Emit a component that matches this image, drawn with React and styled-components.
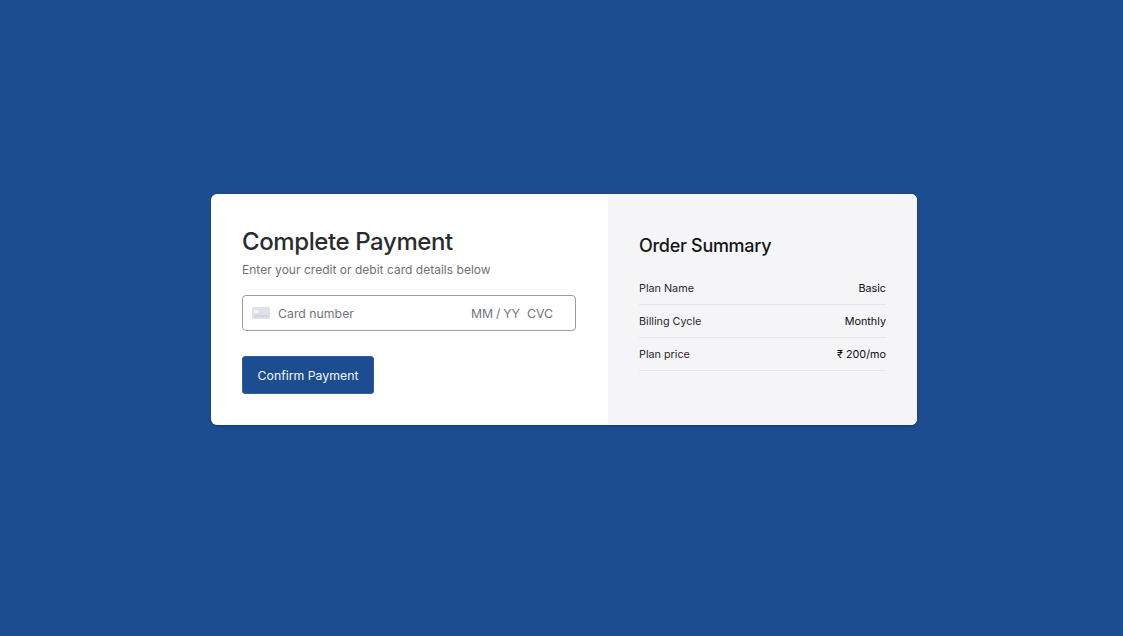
import React from "react";
import styled, { createGlobalStyle } from "styled-components";

const Global = createGlobalStyle`
  html, body { margin: 0; padding: 0; height: 100%; }
  body { background: #1c4d91; font-family: Inter, "Liberation Sans", sans-serif; }
  #root { height: 100%; }
  * { box-sizing: border-box; }
`;
const Page = styled.main`
  height: 636px;
  padding: 194px 0 0 211px;
`;
const Card = styled.section`
  width: 706px;
  height: 231px;
  display: flex;
  border-radius: 6px;
  overflow: hidden;
  background: #fff;
  box-shadow: 0 1px 3px rgba(0, 0, 0, 0.25);
`;
const Left = styled.div`
  width: 397px;
  padding: 33px 31px 0 31px;
`;
const Title = styled.h1`
  margin: 0;
  font-size: 24px;
  line-height: 30px;
  font-weight: 500;
  letter-spacing: -0.4px;
  color: #2a2c2e;
`;
const Sub = styled.p`
  margin: 5px 0 0;
  font-size: 12px;
  line-height: 16px;
  letter-spacing: 0.02px;
  color: #6f7175;
`;
const Field = styled.div`
  margin-top: 17px;
  width: 334px;
  height: 36px;
  display: flex;
  align-items: center;
  padding: 0 22px 0 9px;
  border: 1px solid #9a9b9e;
  border-radius: 4px;
  font-size: 12.3px;
  color: #737579;
`;
const CardIcon = styled.svg`
  width: 18px;
  height: 12px;
  margin-right: 8px;
  flex: none;
`;
const Grow = styled.span`
  flex: 1;
`;
const Expiry = styled.span`
  margin-right: 7px;
  word-spacing: -0.6px;
`;
const Button = styled.button`
  margin-top: 25px;
  display: block;
  width: 132px;
  height: 38px;
  border: 1px solid #2f5f9f;
  border-radius: 3px;
  background: #1c4d91;
  color: #f4f6fa;
  font: 400 12.3px Inter, "Liberation Sans", sans-serif;
`;
const Right = styled.aside`
  flex: 1;
  background: #f5f5f7;
  padding: 40px 31px 0 31px;
`;
const Heading = styled.h2`
  margin: 0 0 14px;
  font-size: 18px;
  line-height: 24px;
  font-weight: 500;
  letter-spacing: -0.3px;
  color: #141517;
`;
const Row = styled.div`
  height: 33px;
  display: flex;
  align-items: center;
  justify-content: space-between;
  border-bottom: 1px solid #e5e5e8;
  font-size: 10.8px;
  color: #26282b;
`;
const Value = styled.span`
  color: #0b0c0e;
`;

export default function App() {
  return (
    <Page>
      <Global />
      <Card>
        <Left>
          <Title>Complete Payment</Title>
          <Sub>Enter your credit or debit card details below</Sub>
          <Field>
            <CardIcon viewBox="0 0 18 12">
              <rect width="18" height="12" rx="1.5" fill="#dfe1ea" />
              <rect x="1.5" y="3" width="5" height="3" fill="#f3f4f8" />
              <rect x="1.5" y="8.5" width="15" height="1" fill="#c6c8d4" />
            </CardIcon>
            <Grow>Card number</Grow>
            <Expiry>MM / YY</Expiry>
            <span>CVC</span>
          </Field>
          <Button>Confirm Payment</Button>
        </Left>
        <Right>
          <Heading>Order Summary</Heading>
          <Row><span>Plan Name</span><Value>Basic</Value></Row>
          <Row><span>Billing Cycle</span><Value>Monthly</Value></Row>
          <Row><span>Plan price</span><Value>₹ 200/mo</Value></Row>
        </Right>
      </Card>
    </Page>
  );
}
